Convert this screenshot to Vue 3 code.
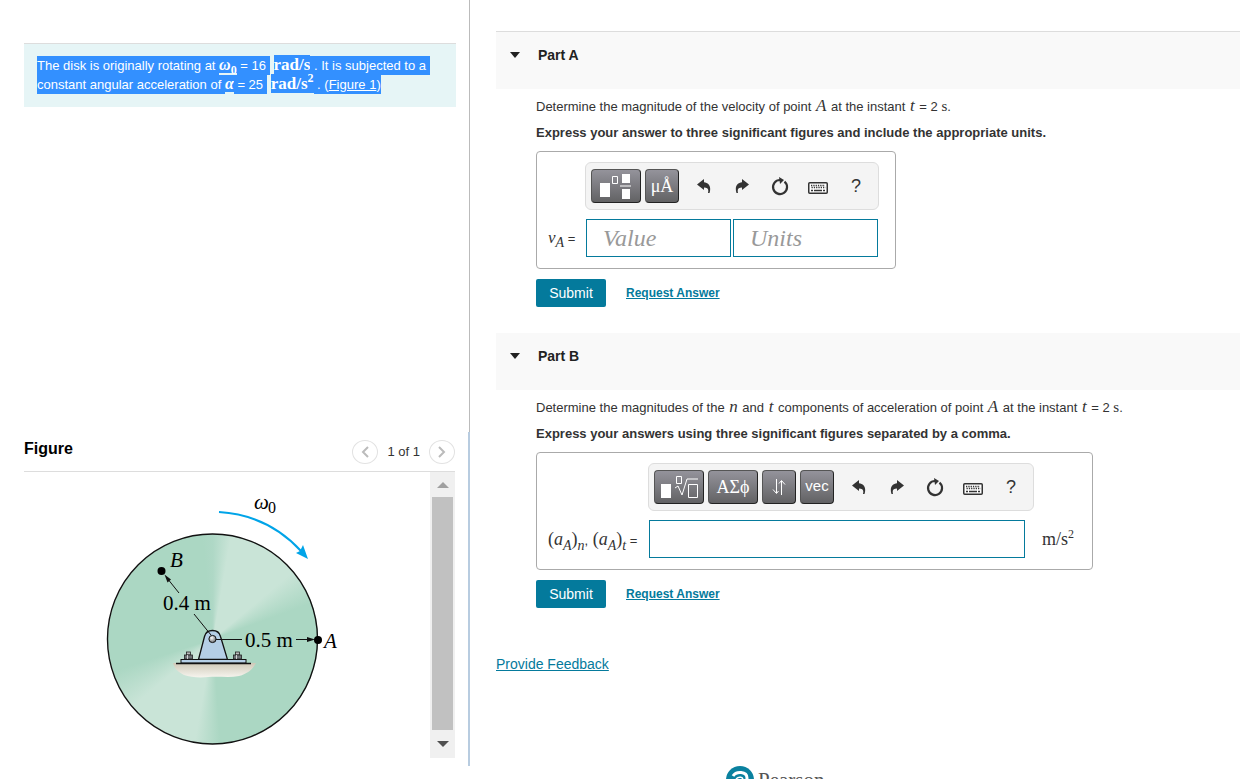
<template>
  <div class="page">
    <aside class="left-pane">
      <div class="problem-area">
        <div class="problem">
          <p>
            <span class="sel">The disk is originally rotating at </span><span class="sel math sym">ω<sub>0</sub></span><span class="sel"> = 16 </span><span class="sel math unit">rad/s</span><span class="sel">&nbsp;. It is subjected to a </span><br />
            <span class="sel">constant angular acceleration of </span><span class="sel math sym">α</span><span class="sel"> = 25 </span><span class="sel math unit">rad/s<sup>2</sup></span><span class="sel">&nbsp;. (<a href="#figure">Figure 1</a>)</span>
          </p>
        </div>
      </div>

      <section id="figure" class="figure-area">
        <header class="figure-header">
          <h2>Figure</h2>
          <div class="pager">
            <button type="button" class="round-btn" aria-label="Previous figure">
              <svg width="10" height="14" viewBox="0 0 10 14"><path d="M8 2 3 7l5 5" /></svg>
            </button>
            <span>{{ figure }} of {{ figureCount }}</span>
            <button type="button" class="round-btn" aria-label="Next figure">
              <svg width="10" height="14" viewBox="0 0 10 14"><path d="m2 2 5 5-5 5" /></svg>
            </button>
          </div>
        </header>

        <div class="figure-body">
          <svg class="drawing" width="406" height="286" viewBox="0 0 406 286">
            <defs>
              <linearGradient id="ground" x1="0" y1="0" x2="0" y2="1">
                <stop offset="0" stop-color="#cfc9b8" />
                <stop offset="1" stop-color="#f6f4ee" />
              </linearGradient>
              <radialGradient id="pin" cx="0.4" cy="0.35" r="0.6">
                <stop offset="0" stop-color="#ffffff" />
                <stop offset="1" stop-color="#77797c" />
              </radialGradient>
            </defs>

            <!-- disk -->
            <foreignObject x="83.5" y="62" width="210" height="210">
              <div class="disk-fill"></div>
            </foreignObject>
            <circle cx="188.5" cy="167" r="105" fill="none" stroke="#111" stroke-width="1.4" />

            <!-- rotation arrow -->
            <path d="M195 40Q244 43 277 79" fill="none" stroke="#00a4e8" stroke-width="2" />
            <path d="m284 87-12-6 4-2 3-6z" fill="#00a4e8" />

            <!-- support -->
            <path d="M149 191h83c-4 7-9 11-17 13-10 2-20 0-31 1-9 1-18 0-24-2-6-3-10-7-11-12z" fill="url(#ground)" />
            <path d="M174.500 187.500l6-23c2-8 14-8 16 0l7 23z" fill="#b5cfe6" stroke="#111" stroke-width="1.3" />
            <rect x="157" y="187.500" width="65" height="3.500" fill="#b5cfe6" stroke="#111" />
            <path d="M152 191.500h75" stroke="#111" stroke-width="1.3" />
            <g v-for="x in [160, 209]" :key="x" stroke="#222" stroke-width="0.8">
              <rect :x="x + 2.500" y="180" width="4" height="3" fill="#bbb" />
              <rect :x="x + 0.500" y="183" width="8" height="4" fill="#6f7377" />
              <path :d="`M${x + 3.5} 183v4`" stroke="#eee" />
            </g>

            <!-- dimensions -->
            <g stroke="#111" stroke-width="1">
              <path d="m187 163-17-21M155 121l-12-15M192 167.500h26M272 167.500h12" />
            </g>
            <path d="m140.500 102.500 6.500 5-3.500 3zM291 167.500l-8 2.500v-5z" fill="#111" />
            <circle cx="188.500" cy="167" r="3.600" fill="url(#pin)" stroke="#111" stroke-width="1" />
            <circle cx="137.500" cy="99" r="4" />
            <circle cx="294" cy="168" r="4" />

            <text x="230" y="37" class="it">ω</text>
            <text x="244" y="41" class="small">0</text>
            <text x="146" y="95" class="it">B</text>
            <text x="139" y="138">0.4 m</text>
            <text x="221" y="175">0.5 m</text>
            <text x="300" y="176" class="it">A</text>
          </svg>

          <div class="scrollbar">
            <button type="button" class="scroll-btn" aria-label="Scroll up">
              <svg width="12" height="6" viewBox="0 0 12 6"><path d="M0 6 6 0l6 6z" fill="#a0a0a0" /></svg>
            </button>
            <div class="thumb"></div>
            <button type="button" class="scroll-btn down" aria-label="Scroll down">
              <svg width="12" height="6" viewBox="0 0 12 6"><path d="m0 0 6 6 6-6z" fill="#505050" /></svg>
            </button>
          </div>
        </div>
      </section>
    </aside>

    <main class="right-pane">
      <section v-for="part in parts" :key="part.id" class="part">
        <header class="part-header">
          <svg width="10" height="6" viewBox="0 0 10 6"><path d="M0 0h10L5 6z" fill="#222" /></svg>
          <h2>Part {{ part.id }}</h2>
        </header>

        <div class="part-body">
          <p v-if="part.id === 'A'">
            Determine the magnitude of the velocity of point <i class="math">A</i> at the instant <i class="math">t</i> = 2 <span class="math s">s</span>.
          </p>
          <p v-else>
            Determine the magnitudes of the <i class="math">n</i> and <i class="math">t</i> components of acceleration of point <i class="math">A</i> at the instant <i class="math">t</i> = 2 <span class="math s">s</span>.
          </p>
          <p class="instructions">{{ part.instructions }}</p>

          <div class="answer-box">
            <div class="toolbar">
              <div class="tool-group">
                <button v-for="tool in part.tools" :key="tool" type="button" class="tool" :class="tool" :aria-label="tool">
                  <svg v-if="tool === 'template'" width="32" height="26" viewBox="0 0 32 26">
                    <path d="M0 10h10v14H0zM22 1h8v9h-8zM22 16h8v10h-8zM20 12.500h11v1H20z" fill="#fff" />
                    <path d="M12.500 3.500h5v7h-5z" fill="none" stroke="#fff" />
                  </svg>
                  <svg v-else-if="tool === 'root'" width="38" height="24" viewBox="0 0 38 24">
                    <path d="M1 9h10v14H1z" fill="#fff" />
                    <path d="M16.500 1.500h5v7h-5zM28.500 9.500h9v13h-9zM15 13l3-2 4 9 5-16h11" fill="none" stroke="#fff" />
                  </svg>
                  <svg v-else-if="tool === 'arrows'" width="14" height="16" viewBox="0 0 14 16">
                    <path d="M4.500 0v14M1 10.500l3.500 4 2-2.500M9.500 16V2M7 4.500l2.500-3 3.500 4" fill="none" stroke="#fff" />
                  </svg>
                  <template v-else>{{ labels[tool] }}</template>
                </button>
              </div>
              <div class="icon-group">
                <button type="button" class="icon-btn" aria-label="Undo">
                  <svg width="14" height="16" viewBox="0 0 14 16"><path :d="undoPath" fill="#333" /></svg>
                </button>
                <button type="button" class="icon-btn" aria-label="Redo">
                  <svg width="14" height="16" viewBox="0 0 14 16" class="flip"><path :d="undoPath" fill="#333" /></svg>
                </button>
                <button type="button" class="icon-btn" aria-label="Reset">
                  <svg width="18" height="20" viewBox="0 0 18 20">
                    <path d="M13.500 5.600A7 7 0 1 1 9 4" fill="none" stroke="#333" stroke-width="2.200" />
                    <path d="m8 1 5 3-4 4z" fill="#333" />
                  </svg>
                </button>
                <button type="button" class="icon-btn keyboard" aria-label="Keyboard shortcuts">
                  <svg width="20" height="12" viewBox="0 0 20 12">
                    <rect x="0.750" y="0.750" width="18.500" height="10.500" rx="1" fill="#fff" stroke="#333" stroke-width="1.500" />
                    <path d="M3 3.500h14M3.500 5.500h14" stroke="#333" stroke-width="1.300" stroke-dasharray="1.300 1" />
                    <path d="M3 8.500h2M6 8.500h8M15 8.500h2" stroke="#333" stroke-width="1.300" />
                  </svg>
                </button>
                <button type="button" class="icon-btn help" aria-label="Help">?</button>
              </div>
            </div>

            <label v-if="part.id === 'A'" for="value-a" class="answer-label"><i>v</i><sub><i>A</i></sub><span class="eq"> =</span></label>
            <label v-else for="value-b" class="answer-label wide">(<i>a</i><sub><i>A</i></sub>)<sub><i>n</i></sub><span class="comma">,</span> (<i>a</i><sub><i>A</i></sub>)<sub><i>t</i></sub><span class="eq"> =</span></label>

            <div v-if="part.id === 'A'" class="fields">
              <input id="value-a" v-model="value" type="text" placeholder="Value" />
              <input v-model="units" type="text" placeholder="Units" aria-label="Units" />
            </div>
            <div v-else class="fields">
              <input id="value-b" v-model="components" type="text" class="long" />
              <span class="suffix">m/s<sup>2</sup></span>
            </div>
          </div>

          <div class="actions">
            <button type="button" class="submit">Submit</button>
            <a href="#">Request Answer</a>
          </div>
        </div>
      </section>

      <a href="#" class="feedback">Provide Feedback</a>

      <footer class="brand">
        <svg width="28" height="28" viewBox="0 0 28 28">
          <circle cx="14" cy="14" r="14" fill="#0a819f" />
          <path d="M7 10c3-5 14-5 14 2 0 5-4 6-8 6" fill="none" stroke="#fff" stroke-width="3" />
          <path d="M10 13c3-3 7-2 7 1" fill="none" stroke="#fff" stroke-width="1.500" />
        </svg>
        <span>Pearson</span>
      </footer>
    </main>
  </div>
</template>

<script setup>
import { ref } from 'vue';

const figure = ref(1);
const figureCount = 1;

const value = ref('');
const units = ref('');
const components = ref('');

const labels = { units: 'μÅ', greek: 'ΑΣϕ', vec: 'vec' };

const undoPath = 'M0 6.500 7 1v3.300c5 .5 7.500 4.500 5.500 10.700h-1.500c1-4-.5-5.500-4-5.500V12z';

const parts = [
  {
    id: 'A',
    instructions: 'Express your answer to three significant figures and include the appropriate units.',
    tools: ['template', 'units']
  },
  {
    id: 'B',
    instructions: 'Express your answers using three significant figures separated by a comma.',
    tools: ['root', 'greek', 'arrows', 'vec']
  }
];
</script>

<style>
body {
  background: #fff;
}
</style>

<style scoped>
.page {
  display: grid;
  grid-template-columns: 470px minmax(0, 1fr);
  height: 100vh;
  overflow: hidden;
  font-family: "Liberation Sans", Arial, sans-serif;
  font-size: 13px;
  color: #333;
}

h2,
p {
  margin: 0;
}

button {
  padding: 0;
  font-family: inherit;
  cursor: pointer;
}

a {
  color: #047a9c;
}

.math {
  margin: 0 1px;
  font-family: "Liberation Serif", "Times New Roman", serif;
  font-size: 17px;
  line-height: 1;
}

.math.s {
  margin: 0;
  font-size: 15px;
}

/* Left pane */
.left-pane {
  display: flex;
  flex-direction: column;
  height: calc(100vh - 13px);
}

.problem-area {
  flex: 1;
  padding: 43px 13px 0 24px;
  border-right: 1px solid #bbb;
}

.problem {
  padding: 12px 13px 13px;
  border-top: 1px solid #ddd;
  background: #e6f5f6;
  line-height: 19px;
  white-space: nowrap;
}

.sel {
  padding: 2px 0;
  background: #3390ff;
  color: #fff;
  white-space: pre-wrap;
}

.sel.math {
  margin: 0;
  padding: 0;
  font-weight: bold;
}

.sel.sym {
  font-size: 16px;
  font-style: italic;
}

.sel.unit {
  margin-left: 4px;
}

.sel a {
  color: #fff;
}

sub,
sup {
  font-size: 12px;
  line-height: 0;
}

.sym sub {
  font-style: normal;
}

.figure-area {
  padding: 0 13px 8px 24px;
  border-right: 2px solid #b8cce0;
}

.figure-header {
  display: flex;
  align-items: center;
  justify-content: space-between;
  height: 39px;
  border-bottom: 1px solid #ddd;
}

.figure-header h2 {
  padding-bottom: 6px;
  font-size: 16px;
  color: #000;
}

.pager {
  display: flex;
  align-items: center;
  gap: 9px;
}

.round-btn {
  display: flex;
  align-items: center;
  justify-content: center;
  width: 26px;
  height: 24px;
  border: 1px solid #e2e2e2;
  border-radius: 50%;
  background: #fff;
}

.round-btn path {
  fill: none;
  stroke: #bbb;
  stroke-width: 2;
}

.figure-body {
  display: flex;
  justify-content: space-between;
}

.drawing {
  display: block;
  font-family: "Liberation Serif", "Times New Roman", serif;
  font-size: 21px;
}

.drawing .it {
  font-style: italic;
}

.drawing .small {
  font-size: 16px;
}

.disk-fill {
  height: 210px;
  border-radius: 50%;
  background: conic-gradient(#afd8c6 0deg, #c9e4d7 10deg, #c9e4d7 50deg, #abd7c3 70deg, #abd7c3 176deg, #c9e4d7 190deg, #c9e4d7 230deg, #abd7c3 252deg, #abd7c3 354deg, #afd8c6 360deg);
}

.scrollbar {
  display: flex;
  flex-direction: column;
  width: 25px;
  background: #f0f0f0;
}

.scroll-btn {
  display: flex;
  align-items: center;
  justify-content: center;
  height: 25px;
  border: 0;
  background: transparent;
}

.scroll-btn.down {
  height: 28px;
}

.thumb {
  flex: 1;
  margin: 0 2px;
  background: #c1c1c1;
}

/* Right pane */
.right-pane {
  padding: 31px 0 0 26px;
  overflow: hidden;
}

.part-header {
  display: flex;
  gap: 18px;
  height: 57px;
  padding-left: 14px;
  border-top: 1px solid transparent;
  background: #f9f9f9;
  background-clip: padding-box;
}

.part:first-child .part-header {
  border-top-color: #ddd;
}

.part-header svg {
  margin-top: 20px;
}

.part-header h2 {
  font-size: 14px;
  line-height: 46px;
  color: #222;
}

.part-body {
  padding: 5px 0 25px 40px;
}

.part-body p {
  line-height: 26px;
}

.instructions {
  font-weight: bold;
}

.answer-box {
  display: grid;
  grid-template-columns: auto auto;
  align-items: center;
  row-gap: 9px;
  width: fit-content;
  margin-top: 5px;
  padding: 10px 16px 11px 11px;
  border: 1px solid #aaa;
  border-radius: 4px;
}

.toolbar {
  grid-column: 2;
  display: flex;
  justify-self: start;
  gap: 6px;
  padding: 6px 3px 6px 5px;
  border: 1px solid #ddd;
  border-radius: 6px;
  background: #f4f4f4;
}

.tool-group {
  display: flex;
  gap: 4px;
}

.tool {
  display: flex;
  align-items: center;
  justify-content: center;
  width: 34px;
  height: 34px;
  border: 1px solid #222;
  border-top-color: #555;
  border-left-color: #555;
  border-radius: 4px;
  background: linear-gradient(#94939b, #626264);
  color: #fff;
  font-size: 15px;
}

.tool.template,
.tool.root,
.tool.greek {
  width: 50px;
}

.tool.vec {
  padding-bottom: 3px;
}

.tool.units,
.tool.greek {
  font-family: "Liberation Serif", "Times New Roman", serif;
  font-size: 18px;
}

.icon-group {
  display: flex;
}

.icon-btn {
  display: flex;
  align-items: center;
  justify-content: center;
  width: 38px;
  height: 34px;
  border: 0;
  background: transparent;
  color: #333;
}

.icon-btn.keyboard {
  padding-top: 4px;
}

.icon-btn.help {
  font-size: 18px;
}

.flip {
  transform: scaleX(-1);
}

.answer-label {
  width: 37px;
  font-family: "Liberation Serif", "Times New Roman", serif;
  font-size: 17px;
  white-space: nowrap;
}

.answer-label.wide {
  width: 100px;
  font-size: 18px;
}

.answer-label sub {
  font-size: 14px;
}

.eq,
.comma {
  font-family: "Liberation Sans", Arial, sans-serif;
  font-size: 13px;
}

.fields {
  display: flex;
  align-items: center;
  gap: 2px;
  padding-left: 1px;
}

.fields input {
  box-sizing: border-box;
  width: 145px;
  height: 38px;
  padding: 0 16px;
  border: 1px solid #047a9c;
  border-radius: 0;
  outline: none;
  font-family: "Liberation Serif", "Times New Roman", serif;
  font-size: 24px;
  color: #333;
}

.fields input::placeholder {
  font-style: italic;
  color: #999;
}

.fields input.long {
  width: 376px;
}

.suffix {
  width: 34px;
  margin-left: 15px;
  font-family: "Liberation Serif", "Times New Roman", serif;
  font-size: 18px;
}

.actions {
  display: flex;
  align-items: center;
  gap: 20px;
  margin-top: 10px;
}

.submit {
  width: 70px;
  height: 28px;
  border: 0;
  border-radius: 2px;
  background: #047a9c;
  color: #fff;
  font-size: 14px;
}

.actions a {
  font-size: 12px;
  font-weight: bold;
}

.feedback {
  display: block;
  width: fit-content;
  margin-top: 22px;
  font-size: 14px;
  line-height: 18px;
}

.brand {
  display: flex;
  align-items: center;
  gap: 4px;
  margin-top: 93px;
  padding-left: 230px;
  font-family: "Liberation Serif", "Times New Roman", serif;
  font-size: 21px;
  color: #555;
}
</style>
